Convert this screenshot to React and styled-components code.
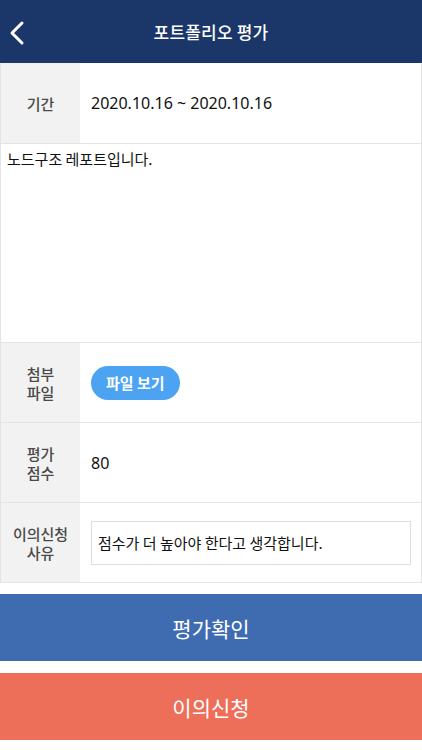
import React from 'react'
import styled, { createGlobalStyle } from 'styled-components'

const Global = createGlobalStyle`
 body{
  margin:0;
  background:#fff;
  font-family:'Noto Sans CJK KR','Noto Sans',sans-serif;
 }
`
const Page = styled.div`
 width:422px;
 display:flex;
 flex-direction:column;
`
const Header = styled.div`
 height:63px;
 background:#1b3769;
 display:flex;
 align-items:center;
 justify-content:center;
 position:relative;
`
const Back = styled.div`
 position:absolute;
 left:9px;
 top:20px;
 width:18px;
 height:26px;
`
const Title = styled.h1`
 margin:0;
 color:#fff;
 font-size:17px;
 font-weight:500;
 letter-spacing:0.2px;
`
const Table = styled.div`
 display:flex;
 flex-direction:column;
 border-left:1px solid #e4e4e4;
 border-right:1px solid #e4e4e4;
`
const Row = styled.div`
 display:flex;
 height:${p => p.h || 79}px;
 border-bottom:1px solid #e4e4e4;
`
const Label = styled.div`
 width:79px;
 flex-shrink:0;
 background:#f2f2f2;
 display:flex;
 align-items:center;
 justify-content:center;
 text-align:center;
 color:#4a4a4a;
 font-size:15px;
 line-height:19px;
 font-weight:500;
`
const Value = styled.div`
 flex:1;
 display:flex;
 align-items:center;
 padding:0 10px 0 11px;
 color:#111;
 font-size:16px;
 font-family:'Noto Sans','Noto Sans CJK KR',sans-serif;
`
const Memo = styled.div`
 flex:1;
 padding:4px 6px;
 color:#111;
 font-size:15px;
`
const FileButton = styled.button`
 border:none;
 background:#4ba3f1;
 color:#fff;
 font-family:'Noto Sans CJK KR',sans-serif;
 font-size:15px;
 font-weight:700;
 height:34px;
 padding:0 15px;
 border-radius:17px;
`
const ReasonBox = styled.div`
 flex:1;
 height:44px;
 box-sizing:border-box;
 border:1px solid #dedede;
 display:flex;
 align-items:center;
 padding:0 6px;
 font-size:15px;
 color:#111;
 font-family:'Noto Sans CJK KR',sans-serif;
`
const Actions = styled.div`
 display:flex;
 flex-direction:column;
 gap:12px;
 margin-top:11px;
`
const ActionButton = styled.button`
 border:none;
 height:67px;
 width:100%;
 background:${p => p.bg};
 color:#fff;
 font-family:'Noto Sans CJK KR',sans-serif;
 font-size:21px;
 font-weight:400;
`

function App() {
  return (
    <Page>
      <Global />
      <Header>
        <Back>
          <svg width="18" height="26" viewBox="0 0 18 26">
            <path d="M13 3 L3 13 L13 23" fill="none" stroke="#fff" strokeWidth="3" strokeLinecap="round" strokeLinejoin="round" />
          </svg>
        </Back>
        <Title>포트폴리오 평가</Title>
      </Header>
      <Table>
        <Row h={80}>
          <Label>기간</Label>
          <Value>2020.10.16 ~ 2020.10.16</Value>
        </Row>
        <Row h={198}>
          <Memo>노드구조 레포트입니다.</Memo>
        </Row>
        <Row>
          <Label>첨부<br />파일</Label>
          <Value><FileButton>파일 보기</FileButton></Value>
        </Row>
        <Row>
          <Label>평가<br />점수</Label>
          <Value>80</Value>
        </Row>
        <Row>
          <Label>이의신청<br />사유</Label>
          <Value><ReasonBox>점수가 더 높아야 한다고 생각합니다.</ReasonBox></Value>
        </Row>
      </Table>
      <Actions>
        <ActionButton bg="#3f6bb0">평가확인</ActionButton>
        <ActionButton bg="#ed6e59">이의신청</ActionButton>
      </Actions>
    </Page>
  )
}

export default App
